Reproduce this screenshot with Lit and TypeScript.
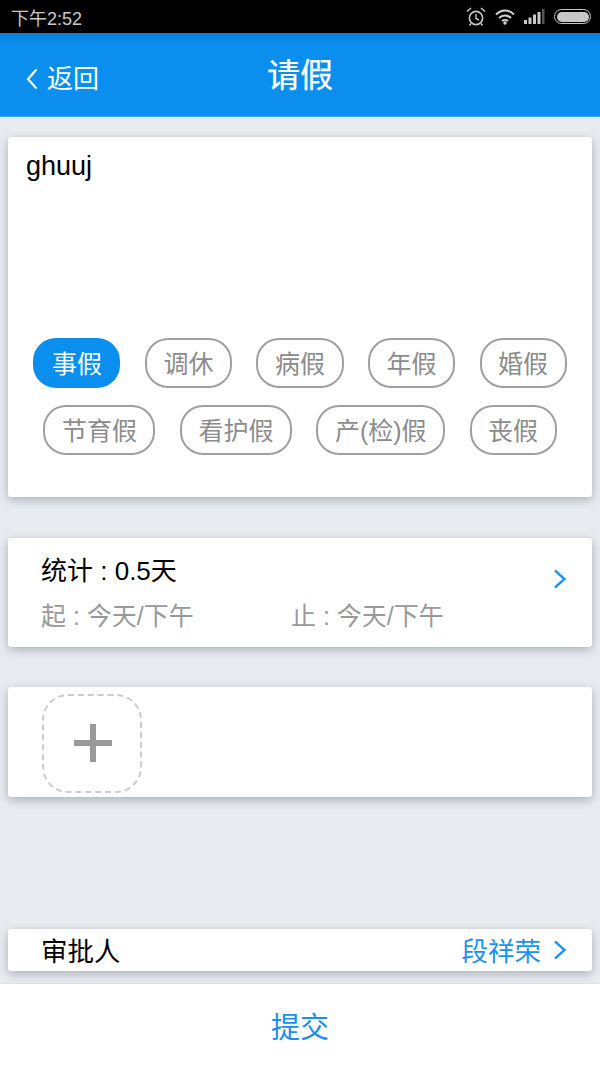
import { LitElement, css, html, svg } from "lit";
import { customElement } from "lit/decorators.js";
import { classMap } from "lit/directives/class-map.js";

const firstRow = ["事假", "调休", "病假", "年假", "婚假"];
const secondRow = ["节育假", "看护假", "产(检)假", "丧假"];

const chevron = (color: string) => html`
	<svg class="chevron" width="14" height="20" viewBox="0 0 14 20">
		<path d="M2 1.5 L11.5 10 L2 18.5" fill="none" stroke=${color} stroke-width="2.4" />
	</svg>
`;

const alarmIcon = svg`
	<circle cx="10" cy="11" r="6.6" fill="none" stroke="#c4c4c4" stroke-width="1.6" />
	<path d="M10 7 V11.5 L13 13" fill="none" stroke="#c4c4c4" stroke-width="1.4" />
	<path d="M1 4.5 L5 1 M19 4.5 L15 1 M5 16.5 L3.5 18.5 M15 16.5 L16.5 18.5" fill="none" stroke="#c4c4c4" stroke-width="1.6" />
`;

const wifiIcon = svg`
	<path d="M1 6.5 C6.5 1 13.5 1 19 6.5" fill="none" stroke="#d4d4d4" stroke-width="2" />
	<path d="M4 10 C7.5 6.8 12.5 6.8 16 10" fill="none" stroke="#d4d4d4" stroke-width="2" />
	<path d="M7 13 C8.6 11.6 11.4 11.6 13 13" fill="none" stroke="#d4d4d4" stroke-width="2" />
	<circle cx="10" cy="15" r="1.7" fill="#d4d4d4" />
`;

const signalIcon = svg`
	<rect x="0" y="11" width="3" height="4" fill="#c8c8c8" />
	<rect x="4.5" y="8.5" width="3" height="6.5" fill="#c8c8c8" />
	<rect x="9" y="5.5" width="3" height="9.5" fill="#c8c8c8" />
	<rect x="13.5" y="3" width="3" height="12" fill="#c8c8c8" />
	<rect x="18" y="0" width="2.5" height="15" fill="#555" />
`;

@customElement("app-root")
export class AppRoot extends LitElement {
	renderTag(label: string, active = false) {
		return html`<span class=${classMap({ tag: true, active })}>${label}</span>`;
	}

	render() {
		return html`
			<div class="status">
				<span class="time">下午2:52</span>
				<div class="status-icons">
					<svg width="20" height="20" viewBox="0 0 20 20">${alarmIcon}</svg>
					<svg width="20" height="17" viewBox="0 0 20 17">${wifiIcon}</svg>
					<svg width="21" height="15" viewBox="0 0 21 15">${signalIcon}</svg>
					<div class="battery"><div class="battery-fill"></div></div>
				</div>
			</div>

			<header class="header">
				<div class="back">
					<svg width="12" height="22" viewBox="0 0 12 22">
						<path d="M10.5 1.5 L2 11 L10.5 20.5" fill="none" stroke="#fff" stroke-width="2.2" />
					</svg>
					<span>返回</span>
				</div>
				<h1 class="title">请假</h1>
			</header>

			<main class="content">
				<section class="card reason">
					<div class="reason-text">ghuuj</div>
					<div class="tags">
						<div class="tag-row">${firstRow.map((t, i) => this.renderTag(t, i === 0))}</div>
						<div class="tag-row">${secondRow.map((t) => this.renderTag(t))}</div>
					</div>
				</section>

				<section class="card stats">
					<div class="stats-body">
						<div class="total">统计 : 0.5天</div>
						<div class="range">
							<span class="range-item">起 : 今天/下午</span>
							<span>止 : 今天/下午</span>
						</div>
					</div>
					${chevron("#2196f0")}
				</section>

				<section class="card attach">
					<div class="add-box">
						<svg width="40" height="40" viewBox="0 0 40 40">
							<path d="M17 1 H23 V17 H39 V23 H23 V39 H17 V23 H1 V17 H17 Z" fill="#9a9a9a" />
						</svg>
					</div>
				</section>

				<section class="card approver">
					<span class="approver-label">审批人</span>
					<span class="approver-name">段祥荣</span>
					${chevron("#2196f0")}
				</section>
			</main>

			<footer class="footer">提交</footer>
		`;
	}

	static styles = css`
		:host {
			display: flex;
			flex-direction: column;
			width: 600px;
			height: 1067px;
			overflow: hidden;
			background: #e8ebf0;
			font-family: "Liberation Sans", "Noto Sans CJK SC", sans-serif;
			color: #000;
		}
		.status {
			height: 33px;
			flex: none;
			background: #000;
			display: flex;
			align-items: center;
			justify-content: space-between;
			padding: 0 9px 0 11px;
			box-sizing: border-box;
		}
		.time {
			font-size: 18px;
			color: #c8c8c8;
		}
		.status-icons {
			display: flex;
			align-items: center;
			gap: 9px;
		}
		.battery {
			width: 37px;
			height: 15px;
			box-sizing: border-box;
			border: 1.5px solid #c8c8c8;
			border-radius: 8px;
			padding: 1.5px;
		}
		.battery-fill {
			height: 100%;
			background: #c8c8c8;
			border-radius: 6px;
		}
		.header {
			position: relative;
			flex: none;
			height: 84px;
			background: linear-gradient(#0581de, #0a8fef 14px);
			border-bottom: 1px solid #3aa6f2;
			box-sizing: border-box;
			display: flex;
			align-items: center;
			justify-content: center;
			color: #fff;
		}
		.back {
			position: absolute;
			left: 26px;
			top: 28px;
			display: flex;
			align-items: center;
			gap: 9px;
			font-size: 26px;
			line-height: 36px;
		}
		.title {
			margin: 3px 0 0;
			font-size: 33px;
			font-weight: 400;
			line-height: 44px;
			-webkit-text-stroke: 0.25px #fff;
		}
		.content {
			flex: 1;
			display: flex;
			flex-direction: column;
			padding: 20px 8px 0;
			min-height: 0;
		}
		.card {
			background: #fff;
			border-radius: 3px;
			box-shadow: 0 3px 10px rgba(80, 90, 105, 0.4);
			flex: none;
		}
		.reason {
			height: 360px;
			box-sizing: border-box;
			padding: 12px 18px 0;
			margin-bottom: 41px;
		}
		.reason-text {
			font-size: 27px;
			line-height: 34px;
			height: 189px;
		}
		.tags {
			display: flex;
			flex-direction: column;
			gap: 17px;
		}
		.tag-row {
			display: flex;
			justify-content: center;
			gap: 24.5px;
		}
		.tag {
			height: 50px;
			line-height: 48px;
			box-sizing: border-box;
			padding: 0 16.5px;
			border: 2px solid #a0a0a0;
			border-radius: 23px;
			font-size: 25px;
			color: #8c8c8c;
			white-space: nowrap;
		}
		.tag.active {
			background: #0a8fef;
			border-color: #0a8fef;
			color: #fff;
		}
		.stats {
			height: 109px;
			box-sizing: border-box;
			padding: 15px 25px 0 33px;
			margin-bottom: 40px;
			display: flex;
			align-items: flex-start;
			justify-content: space-between;
		}
		.stats .chevron {
			margin-top: 16px;
		}
		.total {
			font-size: 26px;
			line-height: 36px;
			margin-bottom: 10px;
		}
		.range {
			display: flex;
			font-size: 25px;
			line-height: 34px;
			color: #999;
		}
		.range-item {
			width: 250px;
		}
		.attach {
			height: 110px;
			box-sizing: border-box;
			padding: 7px 34px;
			margin-bottom: 132px;
		}
		.add-box {
			width: 100px;
			height: 99px;
			box-sizing: border-box;
			padding: 0 0 1px 1px;
			border: 2px dashed #ccc;
			border-radius: 26px;
			display: flex;
			align-items: center;
			justify-content: center;
		}
		.approver {
			height: 42px;
			box-sizing: border-box;
			padding: 0 25px 2px 33px;
			display: flex;
			align-items: center;
		}
		.approver .chevron {
			margin-top: 2px;
		}
		.approver-label {
			font-size: 26.5px;
			flex: 1;
		}
		.approver-name {
			font-size: 26.5px;
			color: #1c93ee;
			margin-right: 12px;
		}
		.footer {
			flex: none;
			height: 84px;
			box-sizing: border-box;
			padding-bottom: 2px;
			background: #fff;
			border-top: 1px solid #dcdfe4;
			display: flex;
			align-items: center;
			justify-content: center;
			font-size: 29px;
			color: #1c8eea;
		}
	`;
}

declare global {
	interface HTMLElementTagNameMap {
		"app-root": AppRoot;
	}
}
